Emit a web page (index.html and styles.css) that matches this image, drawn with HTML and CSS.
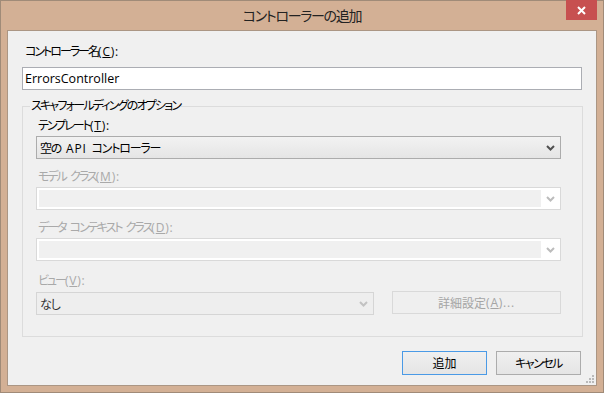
FILE: index.html
```html
<!DOCTYPE html>
<html lang="ja">
<head>
  <meta charset="UTF-8">
  <title>コントローラーの追加</title>
  <link rel="stylesheet" href="styles.css">
</head>
<body>
  <div class="window">
    <div class="titlebar">
      <span></span>
      <div class="title">コントローラーの追加</div>
      <button class="close" aria-label="閉じる">
        <svg width="9" height="9" viewBox="0 0 9 9"><path d="M1 1 L8 8 M8 1 L1 8" stroke="#fff" stroke-width="2" fill="none"/></svg>
      </button>
    </div>

    <div class="client">
      <div class="label name-label">コントローラー名<span class="key">(<u>C</u>):</span></div>
      <div class="textbox">ErrorsController</div>

      <fieldset class="group">
        <legend>スキャフォールディングのオプション</legend>

        <div class="field">
          <div class="label">テンプレート<span class="key">(<u>T</u>):</span></div>
          <div class="combo">
            <span class="combo-text">空の <span class="key">API</span> コントローラー</span>
            <svg class="arrow" width="9" height="6" viewBox="0 0 9 6"><path d="M1 1 L4.5 4.5 L8 1" stroke="#505050" stroke-width="2" fill="none"/></svg>
          </div>
        </div>

        <div class="field">
          <div class="label disabled">モデル クラス<span class="key">(<u>M</u>):</span></div>
          <div class="combo combo-off">
            <span class="combo-text"></span>
            <span class="combo-btn">
              <svg class="arrow" width="9" height="6" viewBox="0 0 9 6"><path d="M1 1 L4.5 4.5 L8 1" stroke="#bcbcbc" stroke-width="2" fill="none"/></svg>
            </span>
          </div>
        </div>

        <div class="field">
          <div class="label disabled">データ コンテキスト クラス<span class="key">(<u>D</u>):</span></div>
          <div class="combo combo-off">
            <span class="combo-text"></span>
            <span class="combo-btn">
              <svg class="arrow" width="9" height="6" viewBox="0 0 9 6"><path d="M1 1 L4.5 4.5 L8 1" stroke="#bcbcbc" stroke-width="2" fill="none"/></svg>
            </span>
          </div>
        </div>

        <div class="field field-view">
          <div class="label disabled">ビュー<span class="key">(<u>V</u>):</span></div>
          <div class="view-row">
            <div class="combo combo-view">
              <span class="combo-text">なし</span>
              <svg class="arrow" width="9" height="6" viewBox="0 0 9 6"><path d="M1 1 L4.5 4.5 L8 1" stroke="#c2c2c2" stroke-width="2" fill="none"/></svg>
            </div>
            <div class="btn btn-off">詳細設定<span class="key">(<u>A</u>)...</span></div>
          </div>
        </div>
      </fieldset>

      <div class="actions">
        <div class="btn btn-default">追加</div>
        <div class="btn">キャンセル</div>
      </div>

      <svg class="grip" width="8" height="8" viewBox="0 0 8 8">
        <rect x="6" y="0" width="2" height="2" fill="#b9b9b9"/>
        <rect x="3" y="3" width="2" height="2" fill="#b9b9b9"/>
        <rect x="6" y="3" width="2" height="2" fill="#b9b9b9"/>
        <rect x="0" y="6" width="2" height="2" fill="#b9b9b9"/>
        <rect x="3" y="6" width="2" height="2" fill="#b9b9b9"/>
        <rect x="6" y="6" width="2" height="2" fill="#b9b9b9"/>
      </svg>
    </div>
  </div>
</body>
</html>
```

FILE: styles.css
```css
/* janela do diálogo ocupa a tela toda */
html, body {
  margin: 0;
  padding: 0;
  background: #d3b095;
}

body {
  font-family: "Open Sans", "Noto Sans CJK JP", sans-serif;
  font-size: 12px;
  font-feature-settings: "palt";
  color: #000;
}

.window {
  width: 604px;
  height: 393px;
  box-sizing: border-box;
  border: 1px solid #a08b78;
  background: #d3b095;
  display: flex;
  flex-direction: column;
}

/* barra de título */
.titlebar {
  height: 29px;
  display: grid;
  grid-template-columns: 1fr auto 1fr;
  align-items: start;
}

.title {
  font-family: "Noto Sans CJK JP", sans-serif;
  font-size: 14px;
  line-height: 29px;
  letter-spacing: -1.3px;
  color: #222;
}

.close {
  justify-self: end;
  width: 31px;
  height: 20px;
  margin: -1px 6px 0 0;
  padding: 0;
  border: none;
  background: #c75050;
  display: flex;
  align-items: center;
  justify-content: center;
}

/* área cliente */
.client {
  flex: 1;
  margin: 0 6px 6px;
  border: 1px solid #ab9684;
  background: #f0f0f0;
  padding: 13px 14px 0;
  position: relative;
}

/* kana mais estreito, como na fonte do Windows */
.label,
.group legend,
.combo-text,
.btn {
  letter-spacing: -2px;
  word-spacing: 3px;
}

/* trechos latinos voltam ao normal */
.key {
  letter-spacing: 0.8px;
  word-spacing: 0;
}

.label {
  height: 16px;
  line-height: 16px;
  white-space: nowrap;
}

.name-label {
  padding-left: 3px;
}

.disabled {
  color: #a9a9a9;
}

.textbox {
  margin-top: 7px;
  height: 23px;
  box-sizing: border-box;
  border: 1px solid #abadb3;
  background: #fff;
  padding-left: 2px;
  line-height: 21px;
  font-size: 12.5px;
}

/* grupo de opções */
.group {
  margin: 8px -1px 0 0;
  padding: 4px 21px 21px 13px;
  border: 1px solid #dcdcdc;
  min-width: 0;
}

.group legend {
  margin-left: -6px;
  padding: 0 1px;
  line-height: 16px;
  letter-spacing: -1.8px;
}

.field + .field {
  margin-top: 10px;
}

.field .label {
  padding-left: 2px;
}

.field-view {
  margin-top: 12px !important;
}

.combo {
  margin-top: 2px;
  height: 23px;
  box-sizing: border-box;
  border: 1px solid #acacac;
  background: linear-gradient(#f2f2f2, #e5e5e5);
  display: flex;
  align-items: center;
}

.combo-text {
  flex: 1;
  padding-left: 3px;
  white-space: nowrap;
  letter-spacing: -1.2px;
}

.combo .arrow {
  margin-right: 5px;
}

/* combos desabilitados */
.combo-off {
  border-color: #d9d9d9;
  background: #fff;
  padding: 2px 0 2px 2px;
  align-items: stretch;
}

.combo-off .combo-text {
  background: #f0f0f0;
}

.combo-off .combo-btn {
  width: 19px;
  display: flex;
  align-items: center;
  justify-content: center;
}

.combo-off .arrow {
  margin: 0;
}

.view-row {
  margin-top: 2px;
  display: flex;
  gap: 18px;
  align-items: flex-start;
}

.combo-view {
  margin-top: 1px;
  width: 338px;
  border-color: #d5d5d5;
  background: #eeeeee;
  color: #333;
}

.btn {
  width: 85px;
  height: 24px;
  box-sizing: border-box;
  border: 1px solid #acacac;
  background: linear-gradient(#f0f0f0, #e5e5e5);
  display: flex;
  align-items: center;
  justify-content: center;
  white-space: nowrap;
  letter-spacing: -1.5px;
}

.btn-off {
  width: 169px;
  height: 23px;
  border-color: #d9d9d9;
  background: #efefef;
  color: #a5a5a5;
  letter-spacing: 0;
}

.btn-default {
  border-color: #4a9ae6;
  letter-spacing: 0;
}

.actions {
  margin: 14px 1px 0 0;
  display: flex;
  justify-content: flex-end;
  gap: 9px;
}

/* alça de redimensionar no canto */
.grip {
  position: absolute;
  right: 2px;
  bottom: 2px;
}
```
